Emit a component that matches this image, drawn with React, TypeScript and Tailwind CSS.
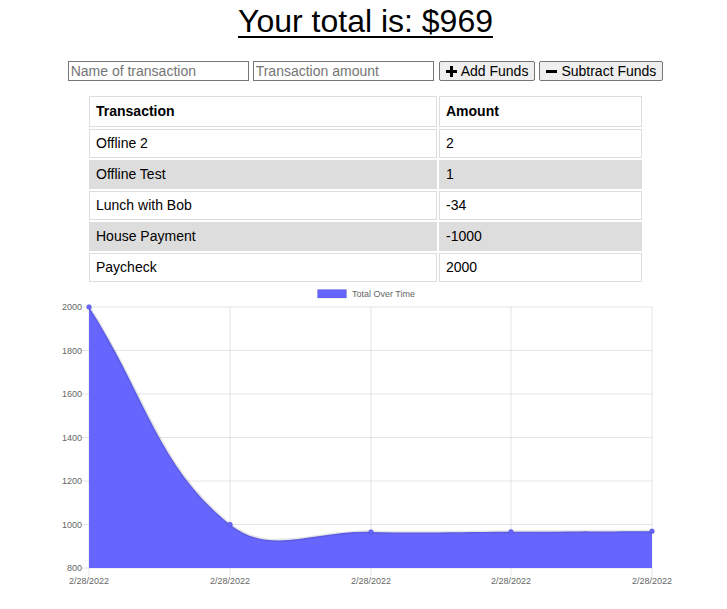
import React from "react";

const rows = [
  { name: "Offline 2", amount: "2" },
  { name: "Offline Test", amount: "1" },
  { name: "Lunch with Bob", amount: "-34" },
  { name: "House Payment", amount: "-1000" },
  { name: "Paycheck", amount: "2000" },
];

const yTicks = [
  { v: "2000", y: 307 },
  { v: "1800", y: 350.5 },
  { v: "1600", y: 394 },
  { v: "1400", y: 437.5 },
  { v: "1200", y: 481 },
  { v: "1000", y: 524.5 },
  { v: "800", y: 568 },
];
const xTicks = [89, 230, 371, 511, 652];
const pts: [number, number][] = [
  [89, 307],
  [230, 524.5],
  [371, 531.9],
  [511, 531.7],
  [652, 531.2],
];

function Chart() {
  const curve =
    "M89,307 C145.4,394 156.9,466.1 230,524.5 C269.7,556.3 314.6,530.4 371,531.9 C427,533.3 455,531.8 511,531.7 C567.4,531.6 595.6,531.4 652,531.2";
  return (
    <svg
      width="727"
      height="323"
      viewBox="0 286 727 323"
      className="block mt-[2px] -ml-[4px]"
      style={{ fontFamily: "'Liberation Sans', Arial, sans-serif" }}
    >
      {/* legend */}
      <rect x="317.5" y="289.5" width="29" height="8.5" fill="#6666ff" stroke="rgba(0,0,0,0.1)" strokeWidth="1" />
      <text x="352" y="296.5" fontSize="9" fill="#666">
        Total Over Time
      </text>
      {/* grid */}
      {yTicks.map((t) => (
        <line key={t.v} x1="81" x2="652" y1={t.y} y2={t.y} stroke="rgba(0,0,0,0.1)" strokeWidth="1" />
      ))}
      {xTicks.map((x) => (
        <line key={x} x1={x} x2={x} y1="307" y2="576" stroke="rgba(0,0,0,0.1)" strokeWidth="1" />
      ))}
      {/* area */}
      <path d={curve + " L652,568 L89,568 Z"} fill="#6666ff" />
      <path d={curve} fill="none" stroke="rgba(0,0,0,0.1)" strokeWidth="3" />
      {pts.map(([x, y], i) => (
        <circle key={i} cx={x} cy={y} r="2.5" fill="#6666ff" stroke="rgba(0,0,0,0.1)" strokeWidth="1" />
      ))}
      {/* labels */}
      {yTicks.map((t) => (
        <text key={t.v} x="82" y={t.y + 3} fontSize="9" fill="#666" textAnchor="end">
          {t.v}
        </text>
      ))}
      {xTicks.map((x) => (
        <text key={x} x={x} y="584" fontSize="9" fill="#666" textAnchor="middle">
          2/28/2022
        </text>
      ))}
    </svg>
  );
}

function PlusIcon() {
  return (
    <svg width="11" height="11" viewBox="0 0 11 11" className="inline-block">
      <rect x="4" y="0" width="3" height="11" fill="#000" />
      <rect x="0" y="4" width="11" height="3" fill="#000" />
    </svg>
  );
}

function MinusIcon() {
  return (
    <svg width="11" height="11" viewBox="0 0 11 11" className="inline-block">
      <rect x="0" y="4" width="11" height="3" fill="#000" />
    </svg>
  );
}

export default function App() {
  return (
    <div
      className="w-[727px] h-[609px] pl-[4px] bg-white text-black overflow-hidden"
      style={{ fontFamily: "'Liberation Sans', Arial, sans-serif" }}
    >
      <h1 className="pt-[3px] text-center text-[32px] leading-[37px] underline decoration-[2px] underline-offset-[4px]">
        Your total is: $969
      </h1>
      <div className="mt-[21px] flex justify-center items-center">
        <input
          className="w-[181px] h-[20px] border border-[#767676] px-[2px] text-[14px] leading-[16px] placeholder:text-[#757575] outline-none"
          placeholder="Name of transaction"
        />
        <input
          className="ml-[4px] w-[181px] h-[20px] border border-[#767676] px-[2px] text-[14px] leading-[16px] placeholder:text-[#757575] outline-none"
          placeholder="Transaction amount"
        />
        <button className="ml-[5px] h-[20px] px-[6px] flex items-center gap-[4px] bg-[#efefef] border border-[#767676] rounded-[2px] text-[14px] leading-[16px]">
          <PlusIcon />
          Add Funds
        </button>
        <button className="ml-[4px] h-[20px] px-[6px] flex items-center gap-[4px] bg-[#efefef] border border-[#767676] rounded-[2px] text-[14px] leading-[16px]">
          <MinusIcon />
          Subtract Funds
        </button>
      </div>
      <table className="mt-[13px] mx-auto border-separate border-spacing-[2px] w-[557px] text-[14px] leading-[17px]">
        <thead>
          <tr>
            <th className="w-[348px] text-left font-bold border border-[#dddddd] px-[6px] py-[6px]">Transaction</th>
            <th className="text-left font-bold border border-[#dddddd] px-[6px] py-[6px]">Amount</th>
          </tr>
        </thead>
        <tbody>
          {rows.map((r, i) => (
            <tr key={r.name} className={i % 2 === 1 ? "bg-[#dddddd]" : ""}>
              <td className="border border-[#dddddd] px-[6px] py-[5px]">{r.name}</td>
              <td className="border border-[#dddddd] px-[6px] py-[5px]">{r.amount}</td>
            </tr>
          ))}
        </tbody>
      </table>
      <Chart />
    </div>
  );
}
